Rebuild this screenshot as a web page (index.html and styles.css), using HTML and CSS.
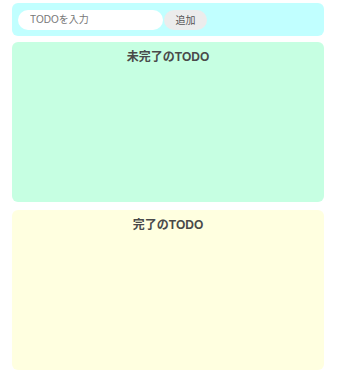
FILE: index.html
```html
<!DOCTYPE html>
<html lang="ja">
<head>
<meta charset="utf-8">
<title>TODO</title>
<link rel="stylesheet" href="styles.css">
</head>
<body>
  <div class="input-area">
    <input class="todo-input" placeholder="TODOを入力">
    <button class="add-btn">追加</button>
  </div>
  <div class="area incomplete-area">
    <p class="title">未完了のTODO</p>
    <ul class="list"></ul>
  </div>
  <div class="area complete-area">
    <p class="title">完了のTODO</p>
    <ul class="list"></ul>
  </div>
</body>
</html>
```
FILE: styles.css
```css
html, body {
  margin: 0;
  background: #ffffff;
}
body {
  padding: 3px 0 0 12px;
  font-family: "Liberation Sans", "Noto Sans CJK JP", sans-serif;
}
.input-area {
  background-color: #c1ffff;
  width: 300px;
  height: 21px;
  padding: 6px;
  border-radius: 6px;
  margin-bottom: 6px;
  display: flex;
  align-items: center;
}
.todo-input {
  box-sizing: border-box;
  width: 145px;
  height: 20px;
  border: none;
  border-radius: 12px;
  padding: 0 12px;
  outline: none;
  font-family: "Liberation Sans", "Noto Sans CJK JP", sans-serif;
  font-size: 10px;
  background: #ffffff;
  margin: 0 1px 0 0;
}
.todo-input::placeholder {
  color: #777777;
}
.add-btn {
  box-sizing: border-box;
  height: 20px;
  width: 43px;
  border: none;
  border-radius: 12px;
  padding: 0;
  background: #ececec;
  color: #555555;
  font-family: "Liberation Sans", "Noto Sans CJK JP", sans-serif;
  font-size: 10px;
}
.area {
  width: 300px;
  min-height: 148px;
  padding: 6px;
  border-radius: 6px;
  margin-bottom: 8px;
}
.incomplete-area {
  background-color: #c6ffe2;
}
.complete-area {
  background-color: #ffffe0;
}
.title {
  margin: 2px 0 0;
  text-align: center;
  font-weight: bold;
  font-size: 12px;
  line-height: 15px;
  color: #4a4a4a;
}
.list {
  margin: 0;
  padding: 0;
  list-style: none;
}
```
